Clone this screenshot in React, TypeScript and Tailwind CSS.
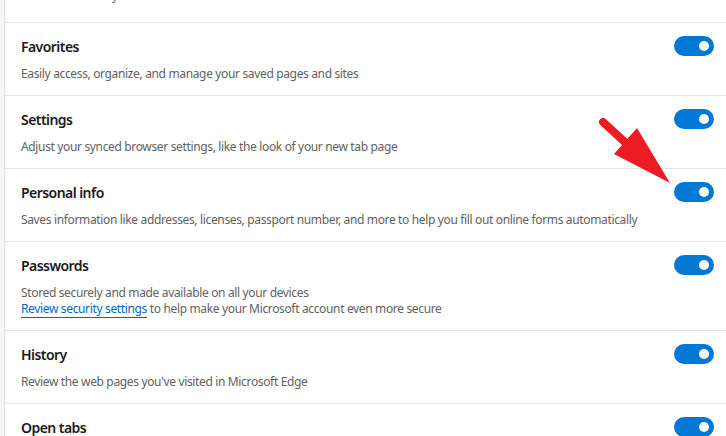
const rows = [
  { title: "Favorites", desc: "Easily access, organize, and manage your saved pages and sites" },
  { title: "Settings", desc: "Adjust your synced browser settings, like the look of your new tab page" },
  {
    title: "Personal info",
    desc: "Saves information like addresses, licenses, passport number, and more to help you fill out online forms automatically",
  },
  { title: "Passwords", desc: "Stored securely and made available on all your devices", link: true },
  { title: "History", desc: "Review the web pages you've visited in Microsoft Edge" },
  { title: "Open tabs", desc: "See the same open tabs when you switch devices" },
];

function Toggle() {
  return (
    <div className="relative h-5 w-10 shrink-0 rounded-full bg-[#0078d4]">
      <span className="absolute right-[5px] top-[5px] h-[10px] w-[10px] rounded-full bg-white" />
    </div>
  );
}

export default function App() {
  return (
    <div className="relative h-[436px] w-[726px] overflow-hidden bg-white font-['Noto_Sans','Open_Sans',sans-serif]">
      <div className="flex h-full">
        {/* left edge of the settings panel */}
        <div className="w-1 shrink-0 bg-[#f6f6f6]" />
        <div className="flex-1 border-l border-[#e3e3e3]">
          {/* tail of the row above */}
          <div className="h-[23px] overflow-hidden border-b border-[#e6e6e6] pl-4">
            <p className="-mt-[12px] text-[12px] leading-4 tracking-[-0.35px] text-[#616161]">Choose what to sync</p>
          </div>

          {rows.map((row) => (
            <div key={row.title} className="border-b border-[#e6e6e6] pb-[13px] pl-4 pr-3 pt-[13px]">
              <div className="flex h-5 items-center justify-between">
                <span className="text-[14px] font-semibold tracking-[-0.55px] text-[#1b1b1b]">{row.title}</span>
                <Toggle />
              </div>
              <p className="mt-[10px] text-[12px] leading-4 tracking-[-0.35px] text-[#616161]">{row.desc}</p>
              {row.link && (
                <p className="text-[12px] leading-4 tracking-[-0.35px] text-[#616161]">
                  <a className="border-b border-[#0067c0] text-[#0067c0]">Review security settings</a> to help make your
                  Microsoft account even more secure
                </p>
              )}
            </div>
          ))}
        </div>
      </div>

      {/* red annotation arrow */}
      <svg className="pointer-events-none absolute left-0 top-0" width="726" height="436" viewBox="0 0 726 436">
        <line x1="603" y1="122" x2="628" y2="145" stroke="#ed1c24" strokeWidth="8" strokeLinecap="round" />
        <polygon points="637,128 670,183 614,154" fill="#ed1c24" />
      </svg>
    </div>
  );
}
